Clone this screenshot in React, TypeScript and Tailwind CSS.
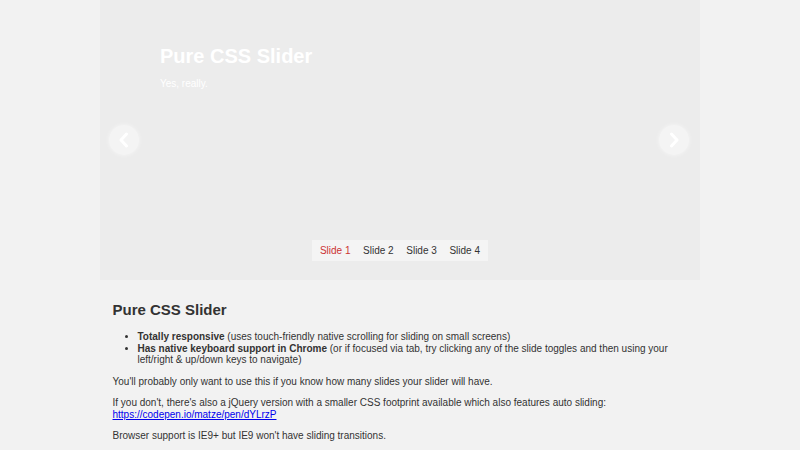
import React from "react";

function Arrow({ dir }: { dir: "left" | "right" }) {
  return (
    <div className="absolute top-[125px] w-[30px] h-[30px] rounded-full bg-[rgba(255,255,255,0.45)] shadow-[0_0_4px_rgba(255,255,255,0.6)] flex items-center justify-center" style={dir === "left" ? { left: 9 } : { right: 11 }}>
      <svg width="12" height="16" viewBox="0 0 12 16">
        {dir === "left" ? (
          <path d="M8.5 2 L3 8 L8.5 14" fill="none" stroke="#fff" strokeWidth="3" strokeLinecap="round" strokeLinejoin="round" />
        ) : (
          <path d="M3.5 2 L9 8 L3.5 14" fill="none" stroke="#fff" strokeWidth="3" strokeLinecap="round" strokeLinejoin="round" />
        )}
      </svg>
    </div>
  );
}

export default function App() {
  return (
    <div className="min-h-[450px] bg-[#f2f2f2] text-[#333] text-[10px]" style={{ fontFamily: '"Liberation Sans", Arial, sans-serif' }}>
      <div className="w-[600px] mx-auto">
        <div className="relative h-[280px] bg-[#ececec]">
          <div className="pl-[60px] pt-[45px]">
            <h1 className="text-[20px] font-bold text-white leading-[23px]">Pure CSS Slider</h1>
            <p className="text-white mt-[10px] leading-[11.5px]">Yes, really.</p>
          </div>
          <Arrow dir="left" />
          <Arrow dir="right" />
          <div className="absolute left-[212px] top-[240px] h-[21px] flex items-center px-[1.6px] bg-[#f4f4f4]">
            <span className="px-[6.3px] text-[#cc3333]">Slide 1</span>
            <span className="px-[6.3px]">Slide 2</span>
            <span className="px-[6.3px]">Slide 3</span>
            <span className="px-[6.3px]">Slide 4</span>
          </div>
        </div>
        <div className="px-[12.5px] pt-[9px] leading-[11.5px]">
          <h2 className="text-[15px] font-bold leading-[17.25px] my-[12.45px]">Pure CSS Slider</h2>
          <ul className="list-disc pl-[25px] mt-[10px] mb-[9px]">
            <li><b>Totally responsive</b> (uses touch-friendly native scrolling for sliding on small screens)</li>
            <li><b>Has native keyboard support in Chrome</b> (or if focused via tab, try clicking any of the slide toggles and then using your left/right &amp; up/down keys to navigate)</li>
          </ul>
          <p className="my-[10px]">You'll probably only want to use this if you know how many slides your slider will have.</p>
          <p className="my-[10px]">If you don't, there's also a jQuery version with a smaller CSS footprint available which also features auto sliding: <a href="#" className="text-[#0000ee] underline">https://codepen.io/matze/pen/dYLrzP</a></p>
          <p className="my-[10px]">Browser support is IE9+ but IE9 won't have sliding transitions.</p>
        </div>
      </div>
    </div>
  );
}
